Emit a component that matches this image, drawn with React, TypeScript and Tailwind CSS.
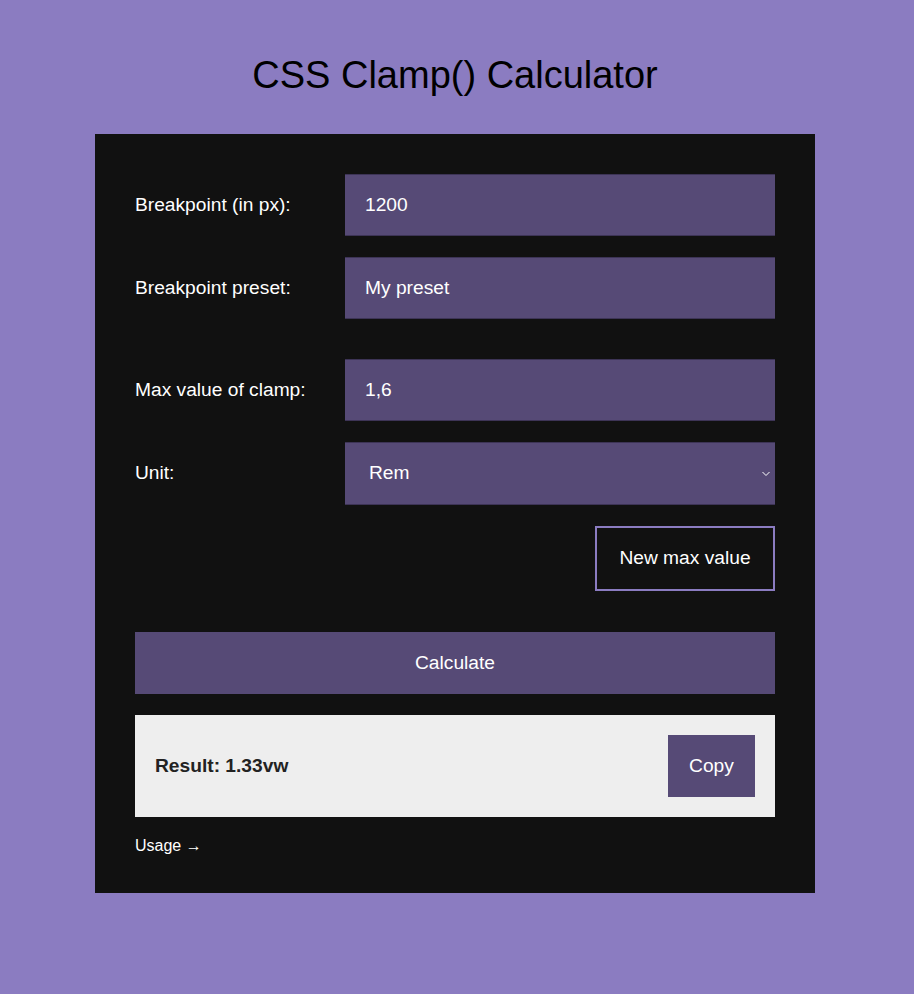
import { useState } from "react";

const inputCls =
  "w-full h-[62px] bg-[#564a76] text-white text-[1.2rem] px-5 outline-none border-y border-[#3d3456]";

export default function App() {
  const [breakpoint, setBreakpoint] = useState("1200");
  const [preset, setPreset] = useState("My preset");
  const [max, setMax] = useState("1,6");
  const [unit, setUnit] = useState("rem");

  return (
    <div
      className="min-h-[994px] bg-[#8b7cc1] pt-[53px] pb-[100px] pr-[4px]"
      style={{ fontFamily: '"Liberation Sans", Arial, sans-serif' }}
    >
      <h1 className="text-center text-[38px] leading-[44px] text-black font-normal">
        CSS Clamp() Calculator
      </h1>

      <div className="w-[720px] mx-auto mt-[37px] bg-[#111111] px-10 pt-10 pb-[38px] text-white">
        <div className="grid grid-cols-[210px_430px] gap-y-[21px] items-center">
          <label className="text-[1.2rem]">Breakpoint (in px):</label>
          <input value={breakpoint} onChange={(e) => setBreakpoint(e.target.value)} className={inputCls} />

          <label className="text-[1.2rem]">Breakpoint preset:</label>
          <input value={preset} onChange={(e) => setPreset(e.target.value)} className={inputCls} />
        </div>

        <div className="grid grid-cols-[210px_430px] gap-y-[21px] items-center mt-10">
          <label className="text-[1.2rem]">Max value of clamp:</label>
          <input value={max} onChange={(e) => setMax(e.target.value)} className={inputCls} />

          <label className="text-[1.2rem]">Unit:</label>
          <div className="relative">
            <select
              value={unit}
              onChange={(e) => setUnit(e.target.value)}
              className={inputCls + " h-[63px] pl-6 appearance-none"}
            >
              <option value="rem">Rem</option>
              <option value="px">Px</option>
              <option value="em">Em</option>
            </select>
            <svg
              className="absolute right-[4px] top-[29px] pointer-events-none"
              width="10"
              height="6"
              viewBox="0 0 10 6"
              fill="none"
              stroke="white"
              strokeWidth="1"
            >
              <path d="M1.5 1 L5 4.5 L8.5 1" />
            </svg>
          </div>
        </div>

        <div className="flex justify-end mt-[21px]">
          <button className="w-[180px] h-[65px] border-2 border-[#8b7cc1] text-white text-[1.2rem]">
            New max value
          </button>
        </div>

        <button className="w-full h-[62px] mt-[41px] bg-[#564a76] text-white text-[1.2rem]">
          Calculate
        </button>

        <div className="mt-[21px] h-[102px] bg-[#eeeeee] flex items-center justify-between pl-5 pr-5">
          <span className="text-[1.2rem] font-bold text-[#222222]">Result: 1.33vw</span>
          <button className="w-[87px] h-[62px] bg-[#564a76] text-white text-[1.2rem]">Copy</button>
        </div>

        <a href="#" className="block mt-[20px] text-[16px] leading-[18px] text-white">
          Usage →
        </a>
      </div>
    </div>
  );
}
